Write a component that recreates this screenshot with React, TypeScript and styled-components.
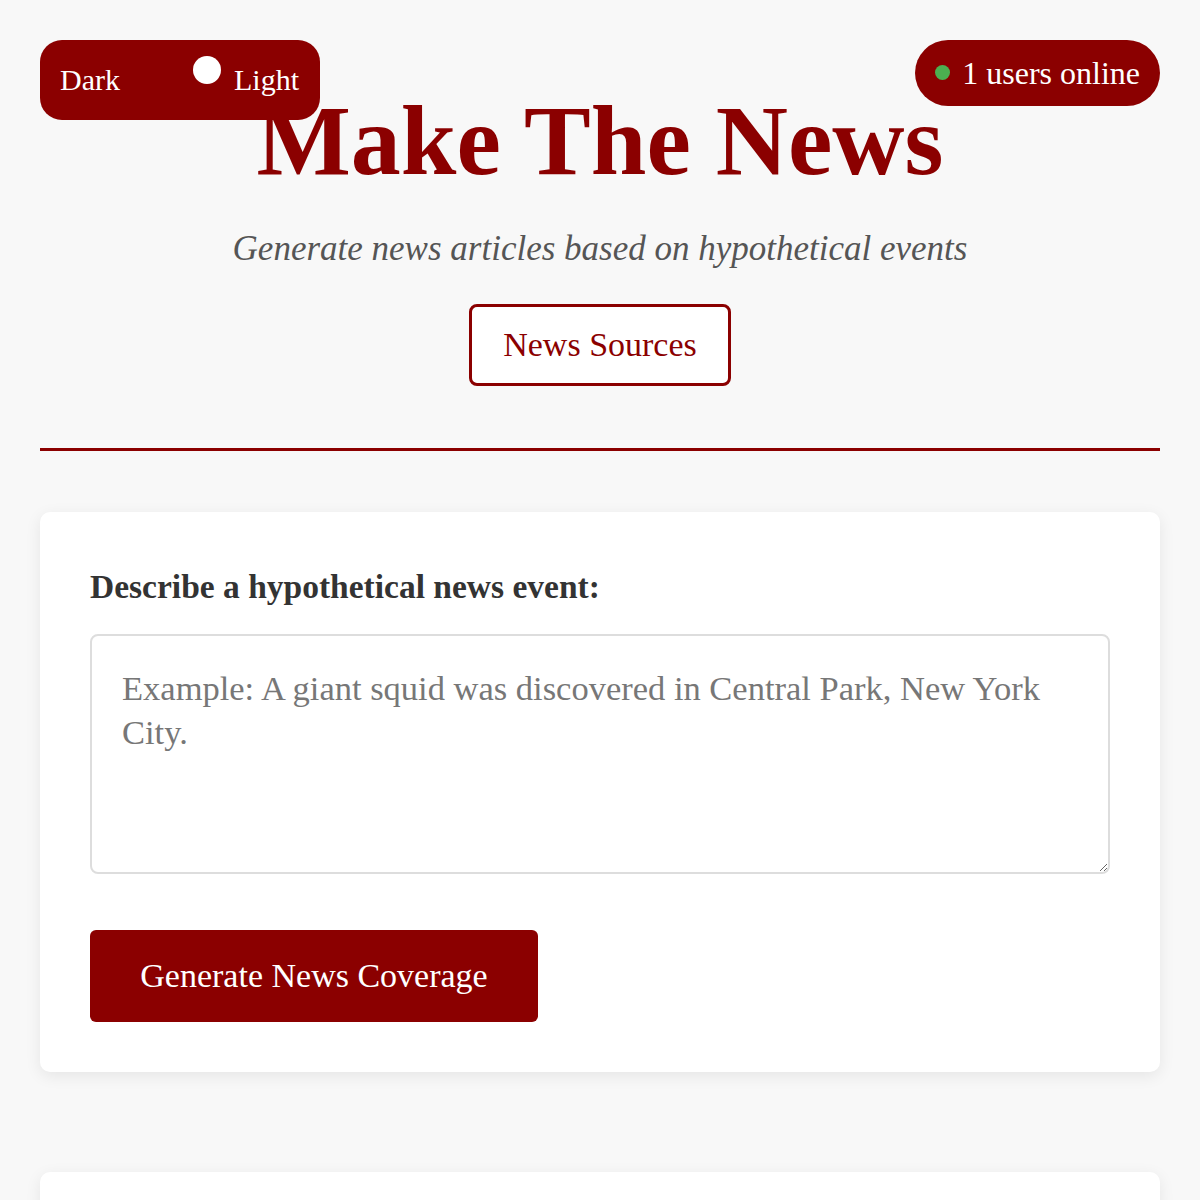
import React, { useState } from 'react';
import styled, { createGlobalStyle } from 'styled-components';

const GlobalStyle = createGlobalStyle`
  body {
    margin: 0;
    background: #f8f8f8;
    font-family: "Liberation Serif", "DejaVu Serif", serif;
    color: #333;
  }
`;

const Page = styled.div`
  padding: 40px;
`;

const Header = styled.header`
  position: relative;
  padding-top: 43px;
  text-align: center;
`;

const ThemeToggle = styled.div`
  position: absolute;
  top: 0;
  left: 0;
  width: 280px;
  height: 80px;
  box-sizing: border-box;
  padding: 0 21px 0 20px;
  display: flex;
  align-items: center;
  justify-content: space-between;
  background: #8b0000;
  color: #fff;
  border-radius: 22px;
  font-size: 30px;
  z-index: 2;
`;

const Switch = styled.div`
  width: 100px;
  height: 80px;
  display: flex;
  justify-content: flex-end;
  align-items: flex-start;
  padding-right: 6px;
  box-sizing: border-box;
`;

const Knob = styled.span`
  margin-top: 16px;
  width: 28px;
  height: 28px;
  border-radius: 50%;
  background: #fff;
`;

const OnlinePill = styled.div`
  position: absolute;
  top: 0;
  right: 0;
  height: 66px;
  box-sizing: border-box;
  padding: 0 20px;
  display: flex;
  align-items: center;
  gap: 12px;
  background: #8b0000;
  color: #fff;
  border-radius: 33px;
  font-size: 32px;
  z-index: 2;
`;

const Dot = styled.span`
  width: 15px;
  height: 15px;
  border-radius: 50%;
  background: #4caf50;
  margin-top: -2px;
`;

const Title = styled.h1`
  margin: 0;
  font-size: 100px;
  font-weight: 700;
  color: #8b0000;
  line-height: normal;
`;

const Subtitle = styled.p`
  margin: 31px 0 0;
  font-size: 35px;
  font-style: italic;
  color: #555;
`;

const OutlineButton = styled.button`
  margin-top: 35px;
  width: 262px;
  height: 82px;
  display: inline-flex;
  align-items: center;
  justify-content: center;
  background: #fff;
  border: 3px solid #8b0000;
  border-radius: 8px;
  color: #8b0000;
  font-family: inherit;
  font-size: 34px;
  cursor: pointer;
`;

const Rule = styled.hr`
  margin: 62px 0 0;
  border: none;
  border-top: 3px solid #8b0000;
`;

const Card = styled.section`
  margin-top: 61px;
  background: #fff;
  border-radius: 10px;
  box-shadow: 0 4px 16px rgba(0, 0, 0, 0.08);
  padding: 50px;
`;

const Label = styled.label`
  display: block;
  margin-top: 6px;
  font-size: 33.5px;
  font-weight: 700;
  color: #333;
`;

const TextArea = styled.textarea`
  display: block;
  margin-top: 28px;
  width: 100%;
  height: 240px;
  box-sizing: border-box;
  border: 2px solid #ddd;
  border-radius: 8px;
  padding: 30px;
  font-family: inherit;
  font-size: 34.5px;
  line-height: 44px;
  color: #333;
  resize: vertical;
  &::placeholder {
    color: #777;
  }
`;

const PrimaryButton = styled.button`
  margin-top: 56px;
  width: 448px;
  height: 92px;
  background: #8b0000;
  border: none;
  border-radius: 6px;
  color: #fff;
  font-family: inherit;
  font-size: 34px;
  cursor: pointer;
`;

const NextCard = styled.section`
  margin-top: 100px;
  height: 200px;
  background: #fff;
  border-radius: 10px;
  box-shadow: 0 4px 16px rgba(0, 0, 0, 0.08);
`;

const App: React.FC = () => {
  const [event, setEvent] = useState('');

  return (
    <Page>
      <GlobalStyle />
      <Header>
        <ThemeToggle>
          <span>Dark</span>
          <Switch>
            <Knob />
          </Switch>
          <span>Light</span>
        </ThemeToggle>
        <OnlinePill>
          <Dot />
          <span>1 users online</span>
        </OnlinePill>
        <Title>Make The News</Title>
        <Subtitle>Generate news articles based on hypothetical events</Subtitle>
        <OutlineButton>News Sources</OutlineButton>
      </Header>
      <Rule />
      <Card>
        <Label htmlFor="event">Describe a hypothetical news event:</Label>
        <TextArea
          id="event"
          value={event}
          onChange={(e) => setEvent(e.target.value)}
          placeholder="Example: A giant squid was discovered in Central Park, New York City."
        />
        <PrimaryButton>Generate News Coverage</PrimaryButton>
      </Card>
      <NextCard />
    </Page>
  );
};

export default App;
